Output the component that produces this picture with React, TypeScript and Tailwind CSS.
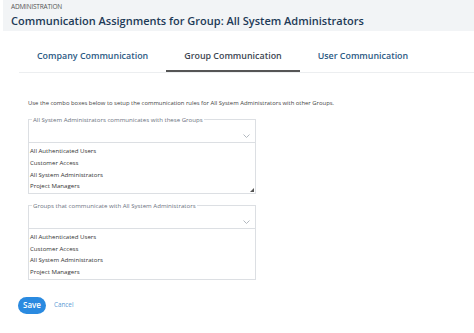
const groups = ["All Authenticated Users", "Customer Access", "All System Administrators", "Project Managers"];

function Chevron() {
  return (
    <svg width="7" height="4" viewBox="0 0 7 4" fill="none" stroke="#a9b0b8" strokeWidth="0.9">
      <path d="M0.5 0.5 L3.5 3.5 L6.5 0.5" />
    </svg>
  );
}

function GroupPicker({ legend, resize }: { legend: string; resize?: boolean }) {
  return (
    <div className="w-[228px]">
      <fieldset className="border border-[#dcdfe3] h-[27px] px-[4px] relative">
        <legend className="px-[1px] text-[6.1px] leading-[7px] text-[#6b7280] ml-[-1px]">{legend}</legend>
        <div className="absolute right-[5px] top-[11px]">
          <Chevron />
        </div>
      </fieldset>
      <div className="relative border border-t-0 border-[#dcdfe3] pt-[2px] pb-[1px] px-[1px] flex flex-col">
        {groups.map((g) => (
          <div key={g} className="h-[11.7px] flex items-center text-[6.1px] text-[#333]">
            {g}
          </div>
        ))}
        {resize && (
          <svg className="absolute right-[1px] bottom-[1px]" width="4" height="4" viewBox="0 0 4 4">
            <path d="M4 0 L4 4 L0 4 Z" fill="#555" />
          </svg>
        )}
      </div>
    </div>
  );
}

export default function App() {
  return (
    <div className="w-[474px] h-[333px] bg-white overflow-hidden" style={{ fontFamily: '"Open Sans", sans-serif' }}>
      <div className="ml-[3px] h-[31px] bg-[#f2f4f6] pl-[8px] pt-[2px]">
        <div className="text-[6.5px] leading-[9px] text-[#555] tracking-[-0.2px]">ADMINISTRATION</div>
        <h1 className="mt-[2px] text-[11px] leading-[16px] font-semibold text-[#1d3a57]">
          Communication Assignments for Group: All System Administrators
        </h1>
      </div>

      <div className="ml-[19px] mt-[11px] flex border-b border-[#eceef0] h-[31px]">
        <div className="px-[18px] flex items-center pb-[3px] text-[8.9px] font-semibold text-[#2b5a83]">Company Communication</div>
        <div className="px-[18px] flex items-center pb-[1px] text-[8.9px] font-semibold text-[#3d4651] border-b-2 border-[#555]">Group Communication</div>
        <div className="px-[18px] flex items-center pb-[3px] text-[8.9px] font-semibold text-[#2b5a83]">User Communication</div>
      </div>

      <div className="pl-[28px] pt-[26px]">
        <p className="text-[5.9px] leading-[8px] text-[#444]">
          Use the combo boxes below to setup the communication rules for All System Administrators with other Groups.
        </p>
        <div className="mt-[9px]">
          <GroupPicker legend="All System Administrators communicates with these Groups" resize />
        </div>
        <div className="mt-[8px]">
          <GroupPicker legend="Groups that communicate with All System Administrators" />
        </div>
      </div>

      <div className="pl-[18px] mt-[17px] flex items-center gap-[8px]">
        <button className="h-[17px] w-[28px] rounded-full bg-[#2a8ae0] text-white text-[8px] font-semibold">Save</button>
        <span className="text-[6.3px] text-[#5b9bd5]">Cancel</span>
      </div>
    </div>
  );
}
